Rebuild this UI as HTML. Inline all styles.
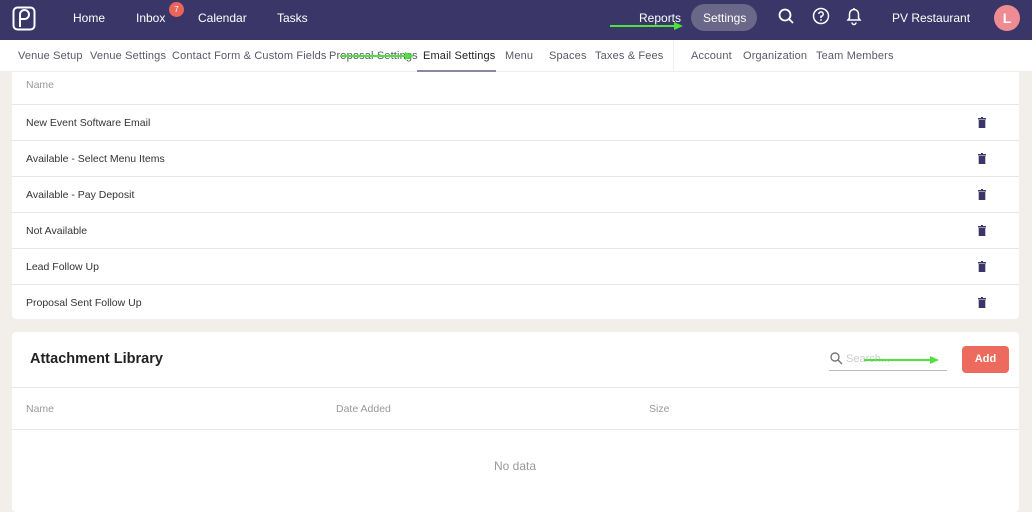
<!DOCTYPE html>
<html><head><style>
*{box-sizing:border-box;margin:0;padding:0}
body{width:1032px;height:503px;overflow:hidden;background:#f2eee9;font-family:"Liberation Sans",sans-serif;position:relative}
.top{position:absolute;left:0;top:0;width:1032px;height:40px;background:#3a3768;color:#fff}
.top span{position:absolute;top:11px;font-size:12px}
.sub{position:absolute;left:0;top:40px;width:1032px;height:32px;background:#fff;border-bottom:1px solid #eee}
.sub span{position:absolute;top:10px;font-size:11px;color:#5a5a66;letter-spacing:0.15px;white-space:nowrap}
.card{position:absolute;left:12px;width:1007px;background:#fff;border-radius:4px}
.row{position:absolute;left:0;width:100%;border-top:1px solid #e8e8e8;height:36px}
.row span{position:absolute;left:14px;top:12px;font-size:10.5px;color:#333}
.trash{position:absolute;left:966px;top:12px;width:8px;height:11px}
</style></head><body>
<div class="top">
<svg style="position:absolute;left:12px;top:6px" width="24" height="26" viewBox="0 0 24 26"><rect x="1.5" y="1.5" width="21" height="22" rx="4" fill="none" stroke="#fff" stroke-width="2"/><path d="M8 21V8.5a4.5 4.5 0 1 1 4.5 4.5H9" fill="none" stroke="#fff" stroke-width="2"/></svg>
<span style="left:73px">Home</span>
<span style="left:136px">Inbox</span>
<div style="position:absolute;left:169px;top:2px;width:15px;height:15px;border-radius:50%;background:#e9645a;color:#fff;font-size:8px;text-align:center;line-height:15px">7</div>
<span style="left:198px">Calendar</span>
<span style="left:277px">Tasks</span>
<span style="left:639px">Reports</span>
<div style="position:absolute;left:610px;top:25px;width:70px;height:2px;background:#4ee23a"></div>
<div style="position:absolute;left:674px;top:22px;border-left:9px solid #4ee23a;border-top:4px solid transparent;border-bottom:4px solid transparent"></div>
<div style="position:absolute;left:691px;top:4px;width:66px;height:27px;border-radius:14px;background:#6a6788"></div>
<span style="left:703px">Settings</span>
<svg style="position:absolute;left:777px;top:7px" width="18" height="18" viewBox="0 0 18 18"><circle cx="8" cy="8" r="5.5" fill="none" stroke="#fff" stroke-width="1.8"/><path d="M12 12l4 4" stroke="#fff" stroke-width="1.8"/></svg>
<svg style="position:absolute;left:812px;top:7px" width="18" height="18" viewBox="0 0 18 18"><circle cx="9" cy="9" r="7.5" fill="none" stroke="#fff" stroke-width="1.5"/><path d="M6.8 7a2.2 2.2 0 1 1 2.2 2.3V11" fill="none" stroke="#fff" stroke-width="1.5"/><circle cx="9" cy="13" r="0.9" fill="#fff"/></svg>
<svg style="position:absolute;left:845px;top:6px" width="18" height="20" viewBox="0 0 18 20"><path d="M3 14h12l-1.5-2V8a4.5 4.5 0 0 0-9 0v4z" fill="none" stroke="#fff" stroke-width="1.5"/><path d="M7 16.5a2 2 0 0 0 4 0M9 2v1.5" fill="none" stroke="#fff" stroke-width="1.5"/></svg>
<span style="left:892px">PV Restaurant</span>
<div style="position:absolute;left:994px;top:5px;width:26px;height:26px;border-radius:50%;background:#ef8b93;color:#fff;font-size:14px;font-weight:bold;text-align:center;line-height:26px">L</div>
</div>
<div class="sub">
<span style="left:18px">Venue Setup</span>
<span style="left:90px">Venue Settings</span>
<span style="left:172px">Contact Form &amp; Custom Fields</span>
<span style="left:329px">Proposal Settings</span>
<div style="position:absolute;left:340px;top:15px;width:66px;height:2px;background:#4ee23a"></div>
<div style="position:absolute;left:405px;top:12px;border-left:9px solid #4ee23a;border-top:4px solid transparent;border-bottom:4px solid transparent"></div>
<span style="left:423px;color:#222">Email Settings</span>
<div style="position:absolute;left:417px;top:30px;width:79px;height:2px;background:#8a87a3"></div>
<span style="left:505px">Menu</span>
<span style="left:549px">Spaces</span>
<span style="left:595px">Taxes &amp; Fees</span>
<div style="position:absolute;left:673px;top:0;width:1px;height:32px;background:#eee"></div>
<span style="left:691px">Account</span>
<span style="left:743px">Organization</span>
<span style="left:816px">Team Members</span>
</div>
<div class="card" style="top:72px;height:247px;border-radius:0 0 4px 4px">
<span style="position:absolute;left:14px;top:7px;font-size:10.5px;color:#999">Name</span>
<div class="row" style="top:32px"><span>New Event Software Email</span><svg class="trash" viewBox="0 0 8 11"><rect x="0" y="1" width="8" height="1.5" fill="#3a3768"/><rect x="3" y="0" width="2" height="1" fill="#3a3768"/><rect x="0.7" y="3" width="6.6" height="8" fill="#3a3768"/></svg></div>
<div class="row" style="top:68px"><span>Available - Select Menu Items</span><svg class="trash" viewBox="0 0 8 11"><rect x="0" y="1" width="8" height="1.5" fill="#3a3768"/><rect x="3" y="0" width="2" height="1" fill="#3a3768"/><rect x="0.7" y="3" width="6.6" height="8" fill="#3a3768"/></svg></div>
<div class="row" style="top:104px"><span>Available - Pay Deposit</span><svg class="trash" viewBox="0 0 8 11"><rect x="0" y="1" width="8" height="1.5" fill="#3a3768"/><rect x="3" y="0" width="2" height="1" fill="#3a3768"/><rect x="0.7" y="3" width="6.6" height="8" fill="#3a3768"/></svg></div>
<div class="row" style="top:140px"><span>Not Available</span><svg class="trash" viewBox="0 0 8 11"><rect x="0" y="1" width="8" height="1.5" fill="#3a3768"/><rect x="3" y="0" width="2" height="1" fill="#3a3768"/><rect x="0.7" y="3" width="6.6" height="8" fill="#3a3768"/></svg></div>
<div class="row" style="top:176px"><span>Lead Follow Up</span><svg class="trash" viewBox="0 0 8 11"><rect x="0" y="1" width="8" height="1.5" fill="#3a3768"/><rect x="3" y="0" width="2" height="1" fill="#3a3768"/><rect x="0.7" y="3" width="6.6" height="8" fill="#3a3768"/></svg></div>
<div class="row" style="top:212px;height:35px"><span>Proposal Sent Follow Up</span><svg class="trash" viewBox="0 0 8 11"><rect x="0" y="1" width="8" height="1.5" fill="#3a3768"/><rect x="3" y="0" width="2" height="1" fill="#3a3768"/><rect x="0.7" y="3" width="6.6" height="8" fill="#3a3768"/></svg></div>
</div>
<div class="card" style="top:332px;height:180px">
<span style="position:absolute;left:18px;top:19px;font-size:14.5px;font-weight:bold;color:#222">Attachment Library</span>
<svg style="position:absolute;left:818px;top:20px" width="13" height="13" viewBox="0 0 13 13"><circle cx="5" cy="5" r="4" fill="none" stroke="#777" stroke-width="1.4"/><path d="M8 8l4 4" stroke="#777" stroke-width="1.4"/></svg>
<span style="position:absolute;left:834px;top:21px;font-size:11px;color:#ccc">Search...</span>
<div style="position:absolute;left:817px;top:38px;width:118px;height:1px;background:#bbb"></div>
<div style="position:absolute;left:852px;top:27px;width:68px;height:2px;background:#4ee23a"></div>
<div style="position:absolute;left:918px;top:24px;border-left:9px solid #4ee23a;border-top:4px solid transparent;border-bottom:4px solid transparent"></div>
<div style="position:absolute;left:950px;top:14px;width:47px;height:27px;border-radius:4px;background:#ec6b5e;color:#fff;font-size:11px;font-weight:bold;text-align:center;line-height:27px">Add</div>
<div style="position:absolute;left:0;top:55px;width:100%;height:1px;background:#e8e8e8"></div>
<span style="position:absolute;left:14px;top:71px;font-size:10.5px;color:#999">Name</span>
<span style="position:absolute;left:324px;top:71px;font-size:10.5px;color:#999">Date Added</span>
<span style="position:absolute;left:637px;top:71px;font-size:10.5px;color:#999">Size</span>
<div style="position:absolute;left:0;top:97px;width:100%;height:1px;background:#e8e8e8"></div>
<span style="position:absolute;left:482px;top:127px;font-size:12px;color:#999">No data</span>
</div>
</body></html>
